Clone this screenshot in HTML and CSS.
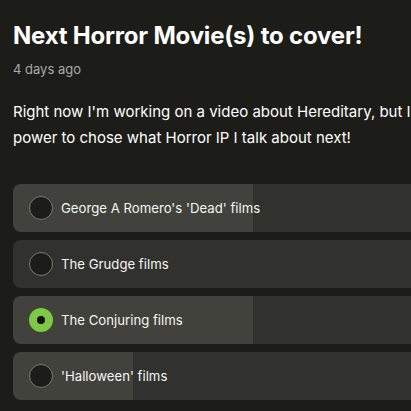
FILE: index.html
```html
<!DOCTYPE html>
<html>
<head>
<meta charset="utf-8">
<link rel="stylesheet" href="styles.css">
</head>
<body>
<div class="post">
  <h1 class="title">Next Horror Movie(s) to cover!</h1>
  <div class="meta">4 days ago</div>
  <p class="body">Right now I'm working on a video about Hereditary, but I want to give you the power to chose what Horror IP I talk about next!</p>
  <div class="poll">
    <div class="option">
      <div class="fill" style="width:240px"></div>
      <span class="radio"></span>
      <span class="label">George A Romero's 'Dead' films</span>
    </div>
    <div class="option">
      <div class="fill" style="width:0px"></div>
      <span class="radio"></span>
      <span class="label">The Grudge films</span>
    </div>
    <div class="option">
      <div class="fill" style="width:240px"></div>
      <span class="radio selected"></span>
      <span class="label">The Conjuring films</span>
    </div>
    <div class="option">
      <div class="fill" style="width:120px"></div>
      <span class="radio"></span>
      <span class="label">'Halloween' films</span>
    </div>
  </div>
</div>
</body>
</html>
```
FILE: styles.css
```css
html, body {
  margin: 0;
  padding: 0;
  background: #1c1d19;
  overflow: hidden;
}
body {
  font-family: Inter, "Noto Sans", sans-serif;
  color: #ffffff;
}
.post {
  padding: 21px 0 0 13px;
  width: 700px;
}
.title {
  margin: 0;
  font-size: 24px;
  font-weight: 700;
  line-height: 30px;
  letter-spacing: -0.2px;
}
.meta {
  margin-top: 9px;
  font-size: 13px;
  line-height: 18px;
  color: #a9aaa5;
}
.body {
  margin: 21px 0 0 0;
  font-size: 15px;
  line-height: 26px;
  width: 580px;
}
.poll {
  margin-top: 33px;
  display: flex;
  flex-direction: column;
  gap: 8px;
}
.option {
  position: relative;
  height: 48px;
  border-radius: 8px;
  background: #31322d;
  overflow: hidden;
  display: flex;
  align-items: center;
  padding-left: 16px;
  gap: 8px;
}
.fill {
  position: absolute;
  left: 0;
  top: 0;
  bottom: 0;
  background: #41423c;
}
.radio {
  position: relative;
  width: 22px;
  height: 22px;
  border-radius: 50%;
  border: 1px solid #7a7b76;
  background: #1c1d19;
  flex: none;
}
.radio.selected {
  border: 8px solid #7dc846;
  width: 8px;
  height: 8px;
  background: #111210;
}
.label {
  position: relative;
  font-size: 13.2px;
  color: #f4f4f2;
}
```
